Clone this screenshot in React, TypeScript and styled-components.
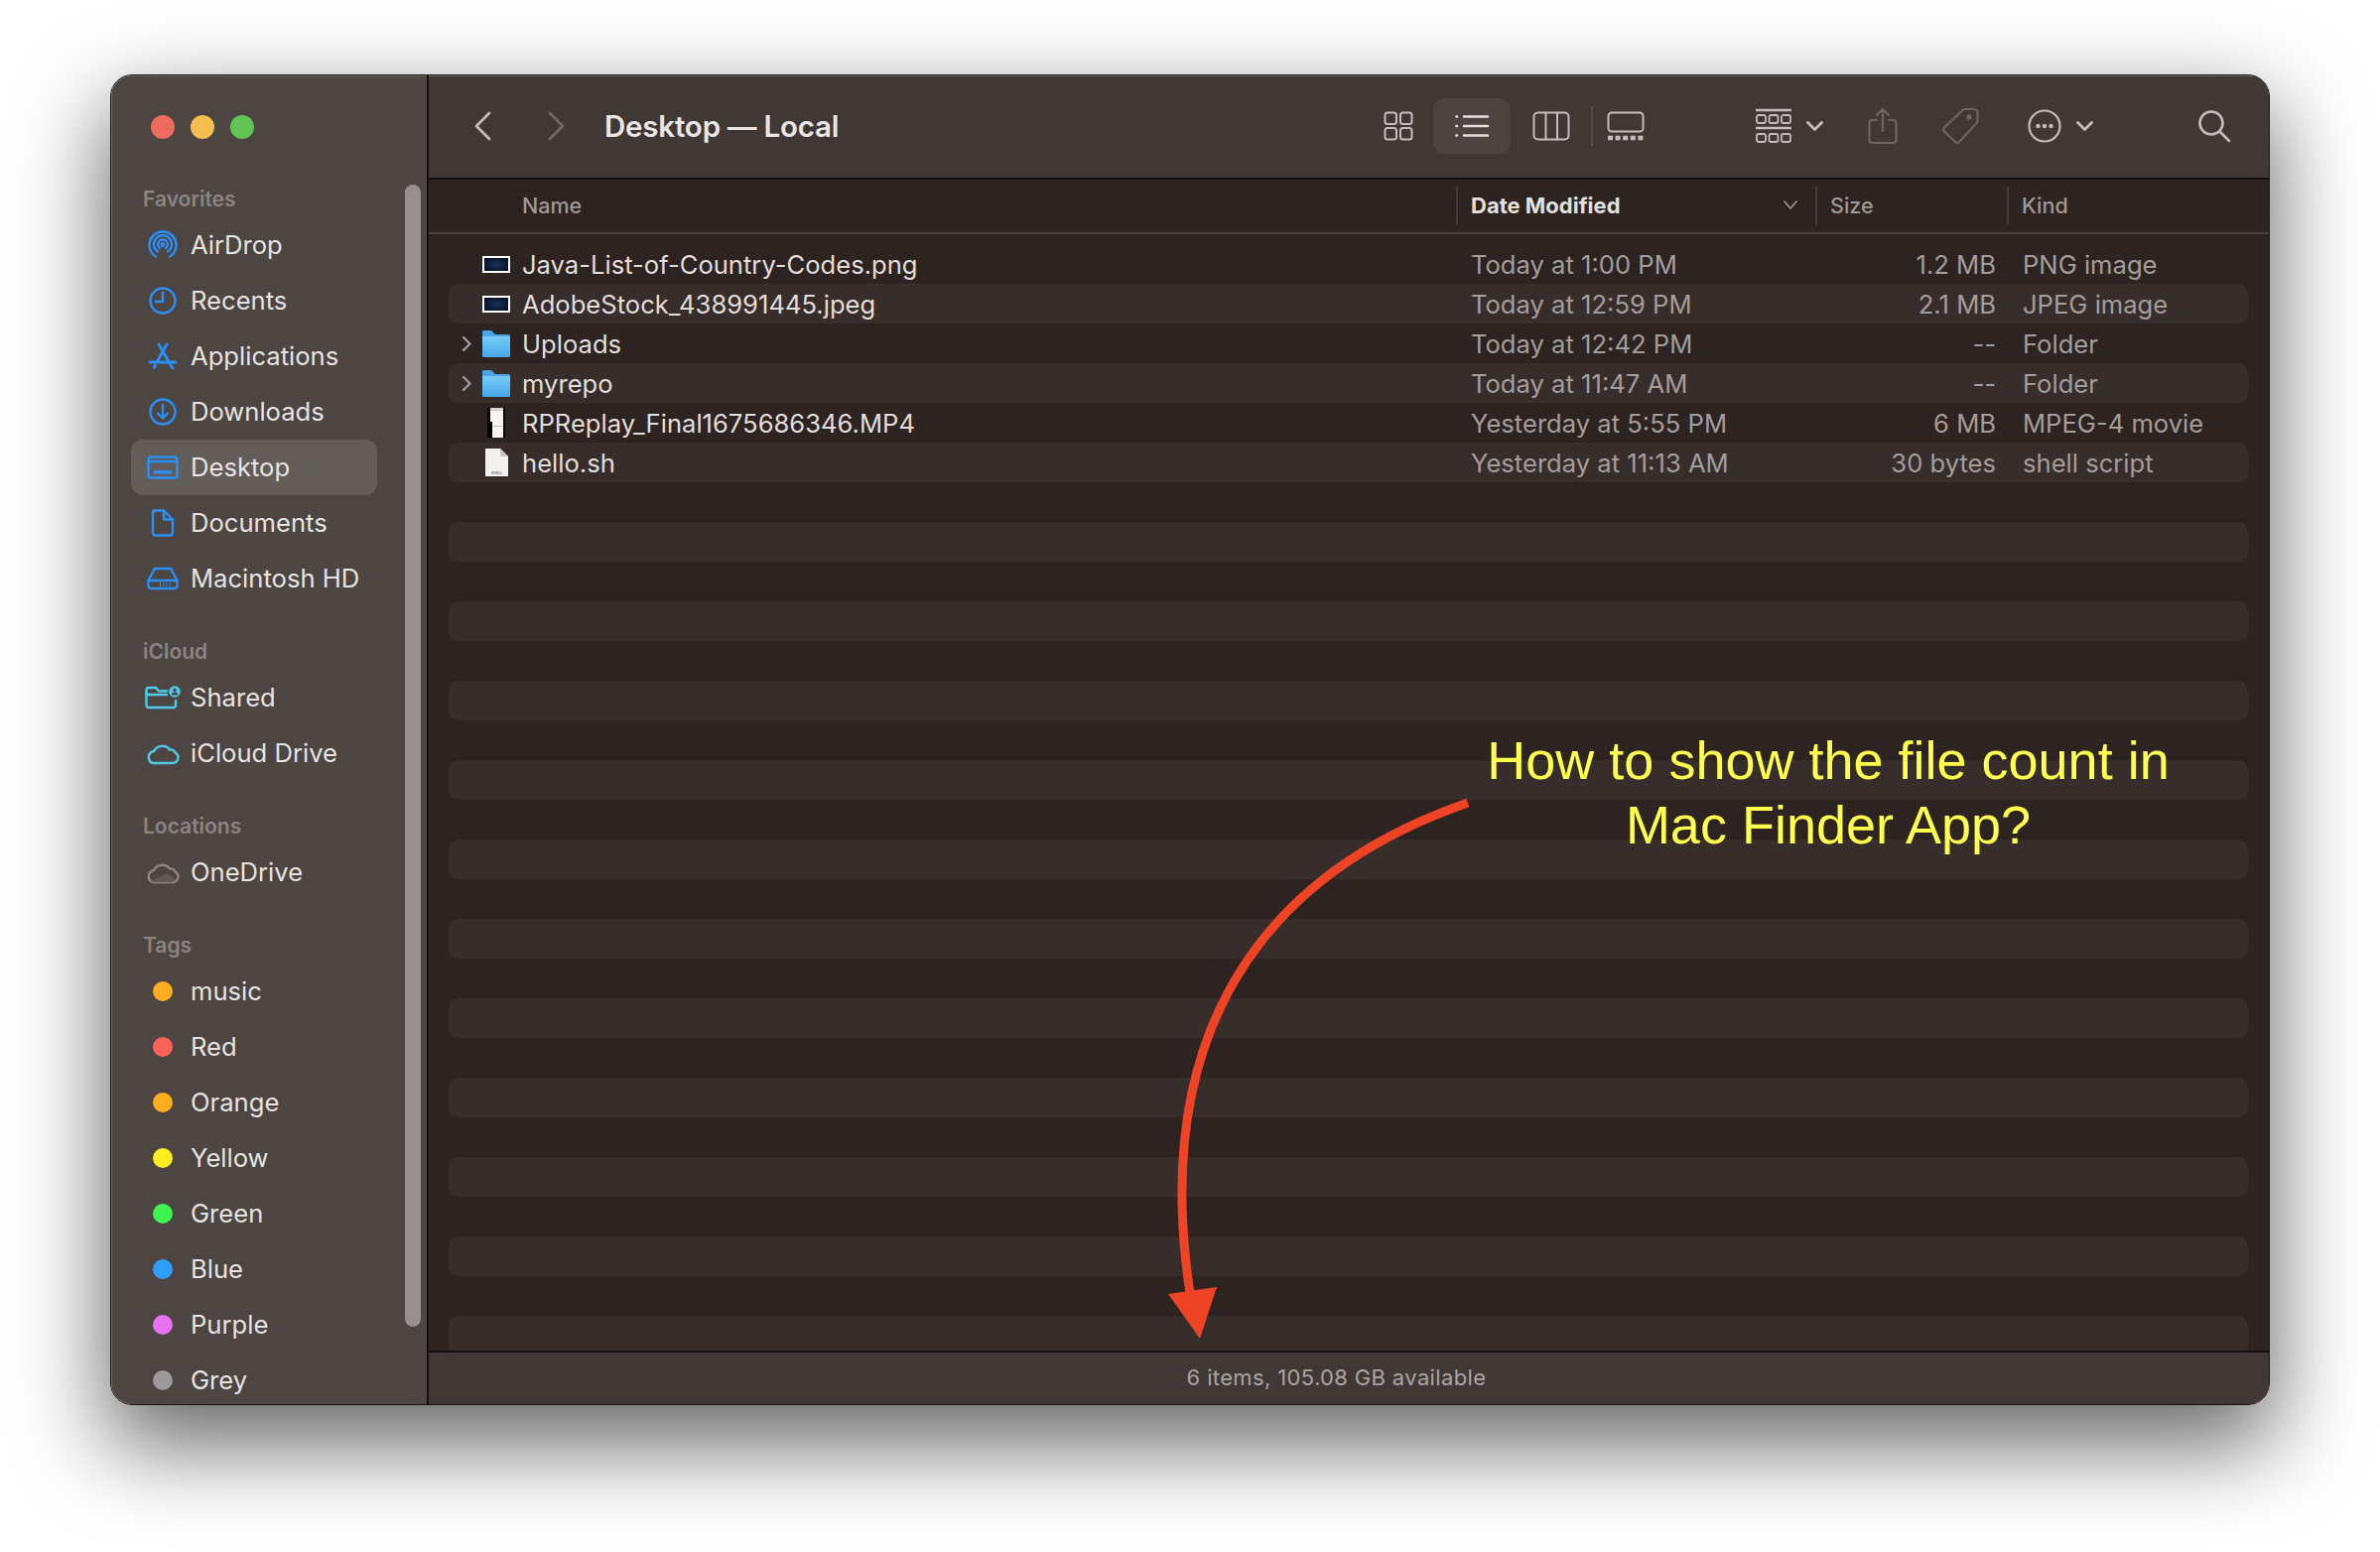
import React from 'react';
import styled, { createGlobalStyle } from 'styled-components';

const GlobalStyle = createGlobalStyle`
  html, body {
    margin: 0;
    background: #ffffff;
  }
  * {
    box-sizing: border-box;
  }
`;

const Page = styled.div`
  width: 2398px;
  height: 1564px;
  padding: 75px 111px 0;
  background: #ffffff;
  font-family: Inter, "Liberation Sans", sans-serif;
  overflow: hidden;
`;

const Window = styled.div`
  position: relative;
  width: 2176px;
  height: 1341px;
  display: flex;
  border: 1px solid #171514;
  border-radius: 22px;
  box-shadow: 0 36px 90px 4px rgba(0, 0, 0, 0.6);
  overflow: hidden;
`;

const Sidebar = styled.aside`
  position: relative;
  width: 320px;
  flex: none;
  padding: 40px 50px 0 20px;
  background: #4c4542;
  border-right: 2px solid #141110;
  box-shadow: inset 1px 1px 0 #6f6a67;
  overflow: hidden;
`;

const Lights = styled.div`
  display: flex;
  gap: 16px;
  padding-left: 20px;
  margin-bottom: 41px;
`;

const Light = styled.span<{ $color: string }>`
  width: 24px;
  height: 24px;
  border-radius: 50%;
  background: ${p => p.$color};
`;

const Section = styled.section`
  margin-bottom: 26px;
`;

const SectionLabel = styled.div`
  height: 38px;
  padding-left: 12px;
  display: flex;
  align-items: center;
  font-size: 21px;
  font-weight: 600;
  color: #8b8582;
`;

const Item = styled.div<{ $active?: boolean }>`
  height: 56px;
  display: flex;
  align-items: center;
  padding-left: 12px;
  gap: 8px;
  border-radius: 12px;
  font-size: 25.6px;
  color: #e6e3e1;
  background: ${p => (p.$active ? '#635d5a' : 'transparent')};
`;

const ItemText = styled.span`
  padding-bottom: 2px;
`;

const ItemIcon = styled.span`
  width: 40px;
  height: 40px;
  flex: none;
  display: flex;
  align-items: center;
  justify-content: center;
`;

const TagDot = styled.span<{ $color: string }>`
  width: 20px;
  height: 20px;
  border-radius: 50%;
  background: ${p => p.$color};
`;

const Scrollbar = styled.div`
  position: absolute;
  left: 296px;
  top: 110px;
  width: 16px;
  height: 1151px;
  border-radius: 8px;
  background: #96918e;
`;

const Main = styled.main`
  flex: 1;
  min-width: 0;
  display: flex;
  flex-direction: column;
  background: #2d2320;
`;

const Toolbar = styled.header`
  height: 105px;
  flex: none;
  display: flex;
  align-items: center;
  padding: 0 38px 2px 39px;
  background: #403835;
  border-bottom: 2px solid #141110;
  box-shadow: inset 0 1px 0 #6f6a67;
`;

const NavButton = styled.span<{ $before?: number }>`
  width: 32px;
  height: 40px;
  flex: none;
  margin-left: ${p => p.$before ?? 0}px;
  display: flex;
  align-items: center;
  justify-content: center;
`;

const Title = styled.h1`
  margin: 0 0 0 33px;
  font-size: 29.5px;
  font-weight: 600;
  letter-spacing: -0.2px;
  color: #e9e6e4;
`;

const Tools = styled.div`
  margin-left: auto;
  display: flex;
  align-items: center;
`;

const Tool = styled.span<{ $before?: number; $active?: boolean }>`
  flex: none;
  display: flex;
  align-items: center;
  justify-content: center;
  margin-left: ${p => p.$before ?? 0}px;
  height: 56px;
  border-radius: 12px;
  background: ${p => (p.$active ? '#4b4441' : 'transparent')};
  ${p => (p.$active ? 'width: 78px;' : '')}
`;

const ToolDivider = styled.span<{ $before: number }>`
  width: 2px;
  height: 40px;
  flex: none;
  margin-left: ${p => p.$before}px;
  background: #534b48;
`;

const ColumnHeader = styled.div`
  height: 55px;
  flex: none;
  display: grid;
  grid-template-columns: 941px 362px 193px 1fr;
  align-items: center;
  padding: 0 0 2px 94px;
  border-bottom: 2px solid #4a413e;
  font-size: 21.5px;
  font-weight: 500;
  color: #9f9996;
`;

const HeaderCell = styled.div<{ $first?: boolean; $sorted?: boolean }>`
  height: 38px;
  display: flex;
  align-items: center;
  justify-content: space-between;
  padding: 0 18px 0 ${p => (p.$first ? 0 : 13)}px;
  border-left: ${p => (p.$first ? 'none' : '2px solid #443b38')};
  color: ${p => (p.$sorted ? '#e4e0de' : '#9f9996')};
  font-size: ${p => (p.$sorted ? 22 : 21.5)}px;
  font-weight: ${p => (p.$sorted ? 700 : 500)};
`;

const List = styled.div`
  flex: 1;
  min-height: 0;
  overflow: hidden;
  padding: 10px 21px 0 20px;
`;

const Row = styled.div<{ $striped: boolean }>`
  height: 40px;
  display: grid;
  grid-template-columns: 34px 28px 968px 300px 229px 1fr;
  align-items: center;
  border-radius: 10px;
  background: ${p => (p.$striped ? '#372d2b' : 'transparent')};
  font-size: 25.6px;
`;

const Disclosure = styled.span`
  display: flex;
  justify-content: center;
  padding-left: 2px;
`;

const FileIcon = styled.span`
  height: 40px;
  display: flex;
  align-items: center;
  justify-content: center;
`;

const Thumb = styled.span`
  width: 28px;
  height: 17px;
  border: 2.5px solid #ffffff;
  background: radial-gradient(ellipse at center, #16345f, #07152c 75%);
`;

const FileName = styled.span`
  padding-left: 12px;
  color: #e2dedc;
  white-space: nowrap;
`;

const DateCell = styled.span`
  color: #a39e9b;
  white-space: nowrap;
`;

const SizeCell = styled.span`
  color: #a39e9b;
  text-align: right;
  white-space: nowrap;
`;

const KindCell = styled.span`
  padding-left: 27px;
  color: #a39e9b;
  white-space: nowrap;
`;

const StatusBar = styled.footer`
  height: 54px;
  flex: none;
  display: flex;
  align-items: center;
  justify-content: center;
  padding: 0 25px 2px 0;
  background: #403835;
  border-top: 2px solid #141110;
  font-size: 22px;
  letter-spacing: 0.36px;
  color: #aaa5a2;
`;

const Annotation = styled.div`
  position: absolute;
  left: 1330px;
  top: 658px;
  width: 800px;
  text-align: center;
  font-family: "Liberation Sans", Arial, sans-serif;
  font-size: 54px;
  line-height: 65px;
  color: #ffff4d;
`;

const ArrowSvg = styled.svg`
  position: absolute;
  left: 1049px;
  top: 725px;
  width: 330px;
  height: 555px;
`;

const Blue = '#2a90f8';
const Cyan = '#4fcbe8';

const Stroke = ({ w = 30, h = 30, color = Blue, sw = 2.4, children }: { w?: number; h?: number; color?: string; sw?: number; children: React.ReactNode }) => (
  <svg width={w} height={h} viewBox={`0 0 ${w} ${h}`} fill="none" stroke={color} strokeWidth={sw} strokeLinecap="round" strokeLinejoin="round">
    {children}
  </svg>
);

const AirDropIcon = () => (
  <Stroke>
    <path d="M8 26.5A13.5 13.5 0 1 1 22 26.5" />
    <path d="M10 21.6A9 9 0 1 1 20 21.6" />
    <path d="M12 18A4.8 4.8 0 1 1 18 18" />
    <circle cx="15" cy="14.5" r="1.2" fill={Blue} />
  </Stroke>
);

const RecentsIcon = () => (
  <Stroke>
    <circle cx="15" cy="15" r="12.5" />
    <path d="M15 7V16H8" />
  </Stroke>
);

const AppsIcon = () => (
  <Stroke sw={2.8}>
    <path d="M11 3L22.5 23" />
    <path d="M19 3L9.5 20" />
    <path d="M2 21H28" />
    <path d="M7.5 24L6.5 26.5" />
    <path d="M23.5 25L25 27" />
  </Stroke>
);

const DownloadsIcon = () => (
  <Stroke>
    <circle cx="15" cy="15" r="12.5" />
    <path d="M15 8V21M10 16.5L15 21.5L20 16.5" />
  </Stroke>
);

const DesktopIcon = () => (
  <Stroke w={32} h={24}>
    <rect x="1.5" y="1.5" width="29" height="21" rx="2.5" />
    <path d="M1.5 6H30.5" />
    <rect x="7" y="15" width="18" height="3.4" fill={Blue} stroke="none" />
  </Stroke>
);

const DocumentsIcon = () => (
  <Stroke w={24} h={28}>
    <path d="M3 1.5H13L22 10.5V24A2.5 2.5 0 0 1 19.5 26.5H4.5A2.5 2.5 0 0 1 2 24V3A1.5 1.5 0 0 1 3 1.5Z" />
    <path d="M13 1.5V9A1.5 1.5 0 0 0 14.5 10.5H22" />
  </Stroke>
);

const DiskIcon = () => (
  <Stroke w={32} h={24}>
    <path d="M8 2H24L30.5 14V19A3 3 0 0 1 27.5 22H4.5A3 3 0 0 1 1.5 19V14Z" />
    <path d="M1.5 14H30.5" />
    <path d="M13 18H25" strokeDasharray="1 2.2" strokeLinecap="butt" strokeWidth={4} />
  </Stroke>
);

const SharedIcon = () => (
  <Stroke w={36} h={24} color={Cyan}>
    <path d="M1.5 7V19.5A2.5 2.5 0 0 0 4 22H29.5A2.5 2.5 0 0 0 31 20V15" />
    <path d="M1.5 7V4A2 2 0 0 1 3.5 2H11L14 5.5H22" />
    <path d="M1.5 9H22" />
    <circle cx="30" cy="6" r="5.8" fill={Cyan} stroke="none" />
    <circle cx="30" cy="4.4" r="1.8" fill="#4c4542" stroke="none" />
    <path d="M26.8 9.6A3.2 3 0 0 1 33.2 9.6Z" fill="#4c4542" stroke="none" />
  </Stroke>
);

const CloudPath = 'M8 23H28A5.6 5.6 0 0 0 30.5 12.5A5 5 0 0 0 25 9.5A9.5 9.5 0 0 0 9 11A6.2 6.2 0 0 0 8 23Z';

const ICloudIcon = () => (
  <Stroke w={36} h={26} color={Cyan}>
    <path d={CloudPath} />
  </Stroke>
);

const OneDriveIcon = () => (
  <Stroke w={36} h={26} color="#8d8885">
    <path d={CloudPath} />
    <path d="M6 22L22 14L32 20L28 23H8Z" fill="#5f5855" stroke="none" />
  </Stroke>
);

const Chevron = ({ dir, color = '#c3bebb', w = 20, h = 30, sw = 2.8 }: { dir: 'left' | 'right'; color?: string; w?: number; h?: number; sw?: number }) => (
  <svg width={w} height={h} viewBox="0 0 20 30" fill="none" stroke={color} strokeWidth={sw} strokeLinecap="round" strokeLinejoin="round">
    <path d={dir === 'left' ? 'M16 2L3 15L16 28' : 'M4 2L17 15L4 28'} />
  </svg>
);

const Caret = () => (
  <svg width={17} height={10} viewBox="0 0 17 10" fill="none" stroke="#c3bebb" strokeWidth={2.8} strokeLinecap="round" strokeLinejoin="round">
    <path d="M1.5 1.5L8.5 8.5L15.5 1.5" />
  </svg>
);

const Tone = '#c3bebb';
const Dim = '#6b6461';

const GridIcon = () => (
  <Stroke color={Tone} sw={2}>
    <rect x="1.5" y="1.5" width="11.5" height="11.5" rx="2.5" />
    <rect x="17" y="1.5" width="11.5" height="11.5" rx="2.5" />
    <rect x="1.5" y="17" width="11.5" height="11.5" rx="2.5" />
    <rect x="17" y="17" width="11.5" height="11.5" rx="2.5" />
  </Stroke>
);

const ListIcon = () => (
  <Stroke w={35} h={24} color="#e4e0de" sw={2.6}>
    <path d="M1.5 2.5H2M1.5 12H2M1.5 21.5H2" />
    <path d="M9 2.5H33M9 12H33M9 21.5H33" />
  </Stroke>
);

const ColumnsIcon = () => (
  <Stroke w={38} h={30} color={Tone} sw={2}>
    <rect x="1.5" y="1.5" width="35" height="27" rx="4" />
    <path d="M13.5 1.5V28.5M25 1.5V28.5" />
  </Stroke>
);

const GalleryIcon = () => (
  <Stroke w={38} h={30} color={Tone} sw={2}>
    <rect x="1.5" y="1.5" width="35" height="19" rx="3.5" />
    <path d="M1 27H37" strokeWidth={4.4} strokeDasharray="5 2.6" strokeLinecap="butt" />
  </Stroke>
);

const GroupIcon = () => (
  <Stroke w={36} h={36} color={Tone} sw={1.8}>
    <path d="M0 2H36M0 20H36" strokeWidth={2.6} strokeLinecap="butt" />
    <rect x="1" y="7" width="9" height="8" rx="2" />
    <rect x="13.5" y="7" width="9" height="8" rx="2" />
    <rect x="26" y="7" width="9" height="8" rx="2" />
    <rect x="1" y="26" width="9" height="8" rx="2" />
    <rect x="13.5" y="26" width="9" height="8" rx="2" />
    <rect x="26" y="26" width="9" height="8" rx="2" />
  </Stroke>
);

const ShareIcon = () => (
  <Stroke w={30} h={38} color={Dim} sw={2.2}>
    <path d="M9 13H4A2.5 2.5 0 0 0 1.5 15.5V33A3 3 0 0 0 4.5 36H25.5A3 3 0 0 0 28.5 33V15.5A2.5 2.5 0 0 0 26 13H21" />
    <path d="M15 24V2M9 8L15 2L21 8" />
  </Stroke>
);

const TagIcon = () => (
  <Stroke w={38} h={38} color={Dim} sw={2.2}>
    <path d="M24 2H33A3.5 3.5 0 0 1 36.5 5.5V14A3 3 0 0 1 35.5 16L18 35A3 3 0 0 1 14 35L3 24.5A3 3 0 0 1 3 20.5L21.5 3A3.5 3.5 0 0 1 24 2Z" />
    <circle cx="28" cy="10" r="1.6" fill={Dim} />
  </Stroke>
);

const MoreIcon = () => (
  <Stroke w={34} h={34} color={Tone} sw={2.2}>
    <circle cx="17" cy="17" r="15.5" />
    <circle cx="10.5" cy="17" r="1.1" fill={Tone} />
    <circle cx="17" cy="17" r="1.1" fill={Tone} />
    <circle cx="23.5" cy="17" r="1.1" fill={Tone} />
  </Stroke>
);

const SearchIcon = () => (
  <Stroke w={34} h={34} color={Tone} sw={2.6}>
    <circle cx="14" cy="14" r="11.5" />
    <path d="M22.5 22.5L32 32" />
  </Stroke>
);

const SortCaret = () => (
  <svg width={14} height={9} viewBox="0 0 14 9" fill="none" stroke="#9f9996" strokeWidth={1.6} strokeLinecap="round" strokeLinejoin="round">
    <path d="M1 1L7 8L13 1" />
  </svg>
);

const FolderIcon = () => (
  <svg width={28} height={27} viewBox="0 0 28 27">
    <defs>
      <linearGradient id="folderFill" x1="0" y1="0" x2="0" y2="1">
        <stop offset="0" stopColor="#76cdf8" />
        <stop offset="1" stopColor="#45a6e8" />
      </linearGradient>
    </defs>
    <path d="M1.5 0H9L13 4H26A2 2 0 0 1 28 6V25A2 2 0 0 1 26 27H2A2 2 0 0 1 0 25V1.5A1.5 1.5 0 0 1 1.5 0Z" fill="#4aa5e4" />
    <path d="M0 6H28V25A2 2 0 0 1 26 27H2A2 2 0 0 1 0 25Z" fill="url(#folderFill)" />
  </svg>
);

const MovieThumb = () => (
  <svg width={18} height={30} viewBox="0 0 18 30">
    <rect width="18" height="30" fill="#0a0a0a" />
    <rect x="3" width="13" height="30" fill="#f6f3f1" />
    <rect x="3" y="18" width="13" height="1" fill="#c9c5c3" />
    <rect x="3" width="13" height="3" fill="#d8d2d0" />
    <rect x="0" y="14" width="5" height="16" fill="#000000" />
  </svg>
);

const DocIcon = () => (
  <svg width={23} height={28} viewBox="0 0 23 28">
    <path d="M0 0H15L23 8V28H0Z" fill="#f3f1f0" />
    <path d="M15 0L23 8H15Z" fill="#c9c6c4" />
    <text x="11.5" y="26" fontSize="3.6" fontFamily="Inter, sans-serif" fontWeight="700" fill="#8a8583" textAnchor="middle">SHELL</text>
  </svg>
);

type SideEntry = { label: string; icon?: React.ReactNode; dot?: string; active?: boolean };

const sections: { title: string; items: SideEntry[] }[] = [
  {
    title: 'Favorites',
    items: [
      { label: 'AirDrop', icon: <AirDropIcon /> },
      { label: 'Recents', icon: <RecentsIcon /> },
      { label: 'Applications', icon: <AppsIcon /> },
      { label: 'Downloads', icon: <DownloadsIcon /> },
      { label: 'Desktop', icon: <DesktopIcon />, active: true },
      { label: 'Documents', icon: <DocumentsIcon /> },
      { label: 'Macintosh HD', icon: <DiskIcon /> },
    ],
  },
  {
    title: 'iCloud',
    items: [
      { label: 'Shared', icon: <SharedIcon /> },
      { label: 'iCloud Drive', icon: <ICloudIcon /> },
    ],
  },
  {
    title: 'Locations',
    items: [{ label: 'OneDrive', icon: <OneDriveIcon /> }],
  },
  {
    title: 'Tags',
    items: [
      { label: 'music', dot: '#ffac1f' },
      { label: 'Red', dot: '#ff6259' },
      { label: 'Orange', dot: '#ffac1f' },
      { label: 'Yellow', dot: '#ffee1f' },
      { label: 'Green', dot: '#3df550' },
      { label: 'Blue', dot: '#2f9dfb' },
      { label: 'Purple', dot: '#e773f2' },
      { label: 'Grey', dot: '#9c989b' },
    ],
  },
];

type FileEntry = { name: string; date: string; size: string; kind: string; icon: React.ReactNode; folder?: boolean };

const files: FileEntry[] = [
  { name: 'Java-List-of-Country-Codes.png', date: 'Today at 1:00 PM', size: '1.2 MB', kind: 'PNG image', icon: <Thumb /> },
  { name: 'AdobeStock_438991445.jpeg', date: 'Today at 12:59 PM', size: '2.1 MB', kind: 'JPEG image', icon: <Thumb /> },
  { name: 'Uploads', date: 'Today at 12:42 PM', size: '--', kind: 'Folder', icon: <FolderIcon />, folder: true },
  { name: 'myrepo', date: 'Today at 11:47 AM', size: '--', kind: 'Folder', icon: <FolderIcon />, folder: true },
  { name: 'RPReplay_Final1675686346.MP4', date: 'Yesterday at 5:55 PM', size: '6 MB', kind: 'MPEG-4 movie', icon: <MovieThumb /> },
  { name: 'hello.sh', date: 'Yesterday at 11:13 AM', size: '30 bytes', kind: 'shell script', icon: <DocIcon /> },
];

const emptyRows = Array.from({ length: 22 }, (_, i) => i);

export default function App() {
  return (
    <>
      <GlobalStyle />
      <Page>
        <Window>
          <Sidebar>
            <Lights>
              <Light $color="#ec6a5e" />
              <Light $color="#f4bf4f" />
              <Light $color="#61c554" />
            </Lights>
            {sections.map(section => (
              <Section key={section.title}>
                <SectionLabel>{section.title}</SectionLabel>
                {section.items.map(item => (
                  <Item key={item.label} $active={item.active}>
                    <ItemIcon>{item.dot ? <TagDot $color={item.dot} /> : item.icon}</ItemIcon>
                    <ItemText>{item.label}</ItemText>
                  </Item>
                ))}
              </Section>
            ))}
            <Scrollbar />
          </Sidebar>
          <Main>
            <Toolbar>
              <NavButton><Chevron dir="left" /></NavButton>
              <NavButton $before={41}><Chevron dir="right" color="#6f6865" /></NavButton>
              <Title>Desktop — Local</Title>
              <Tools>
                <Tool><GridIcon /></Tool>
                <Tool $before={20} $active><ListIcon /></Tool>
                <Tool $before={22}><ColumnsIcon /></Tool>
                <ToolDivider $before={21} />
                <Tool $before={14}><GalleryIcon /></Tool>
                <Tool $before={112}><GroupIcon /></Tool>
                <Tool $before={15}><Caret /></Tool>
                <Tool $before={45}><ShareIcon /></Tool>
                <Tool $before={44}><TagIcon /></Tool>
                <Tool $before={49}><MoreIcon /></Tool>
                <Tool $before={15}><Caret /></Tool>
                <Tool $before={105}><SearchIcon /></Tool>
              </Tools>
            </Toolbar>
            <ColumnHeader>
              <HeaderCell $first>Name</HeaderCell>
              <HeaderCell $sorted>Date Modified<SortCaret /></HeaderCell>
              <HeaderCell>Size</HeaderCell>
              <HeaderCell>Kind</HeaderCell>
            </ColumnHeader>
            <List>
              {files.map((file, i) => (
                <Row key={file.name} $striped={i % 2 === 1}>
                  <Disclosure>{file.folder && <Chevron dir="right" color="#a39e9b" w={10} h={15} sw={4.6} />}</Disclosure>
                  <FileIcon>{file.icon}</FileIcon>
                  <FileName>{file.name}</FileName>
                  <DateCell>{file.date}</DateCell>
                  <SizeCell>{file.size}</SizeCell>
                  <KindCell>{file.kind}</KindCell>
                </Row>
              ))}
              {emptyRows.map(i => (
                <Row key={i} $striped={i % 2 === 1} />
              ))}
            </List>
            <StatusBar>6 items, 105.08 GB available</StatusBar>
          </Main>
          <Annotation>
            How to show the file count in
            <br />
            Mac Finder App?
          </Annotation>
          <ArrowSvg viewBox="1160 800 330 555">
            <path d="M1478 808C1270 880 1158 1040 1198 1302" fill="none" stroke="#ee4324" strokeWidth={9} />
            <polygon points="1176,1303 1225,1296 1208,1348" fill="#ee4324" />
          </ArrowSvg>
        </Window>
      </Page>
    </>
  );
}
